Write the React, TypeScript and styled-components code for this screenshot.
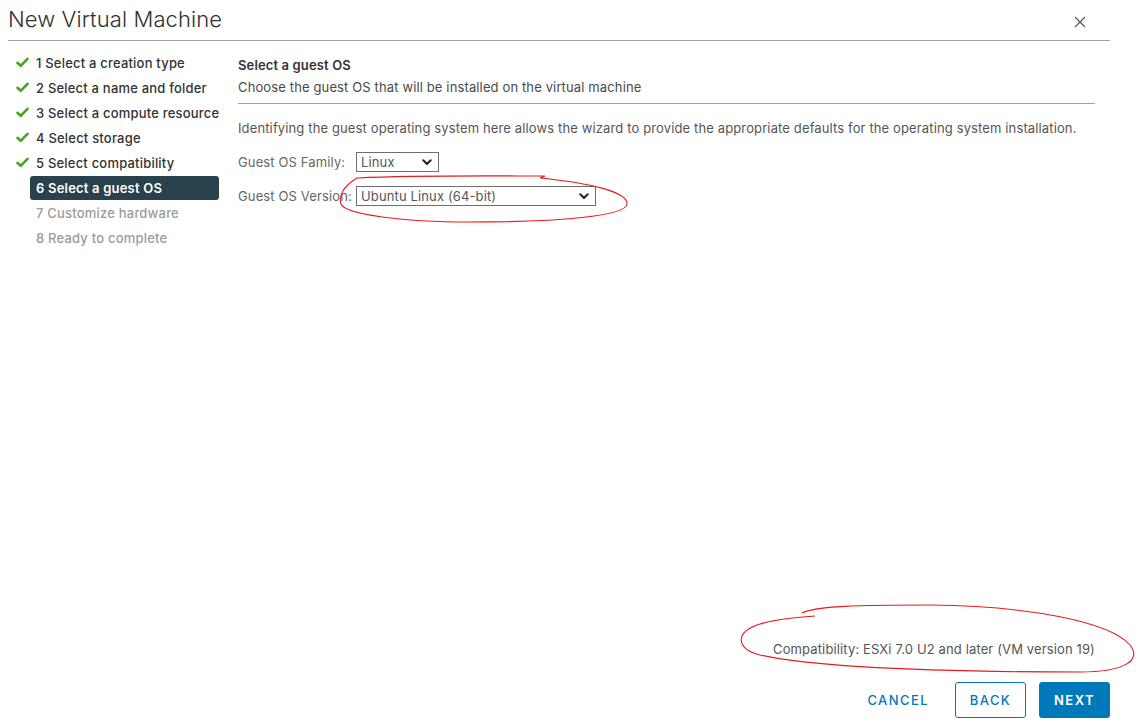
import React from "react";
import styled, { createGlobalStyle } from "styled-components";

const GlobalStyle = createGlobalStyle`
  html, body {
    margin: 0;
    padding: 0;
    background: #ffffff;
    font-family: Inter, "Noto Sans", "Liberation Sans", sans-serif;
  }
  * { box-sizing: border-box; }
`;

type StepState = "done" | "active" | "todo";
interface Step {
  label: string;
  state: StepState;
}

const steps: Step[] = [
  { label: "1 Select a creation type", state: "done" },
  { label: "2 Select a name and folder", state: "done" },
  { label: "3 Select a compute resource", state: "done" },
  { label: "4 Select storage", state: "done" },
  { label: "5 Select compatibility", state: "done" },
  { label: "6 Select a guest OS", state: "active" },
  { label: "7 Customize hardware", state: "todo" },
  { label: "8 Ready to complete", state: "todo" },
];

const CheckIcon = () => (
  <svg width="13" height="11" viewBox="0 0 13 11">
    <path d="M1.5 5.8 L4.7 8.8 L11.5 1.8" fill="none" stroke="#4aa31f" strokeWidth="2.6" strokeLinecap="round" strokeLinejoin="round" />
  </svg>
);

const Chevron = () => (
  <svg width="10" height="7" viewBox="0 0 10 7">
    <path d="M1.3 1.3 L5 5 L8.7 1.3" fill="none" stroke="#222" strokeWidth="2" strokeLinecap="round" strokeLinejoin="round" />
  </svg>
);

const App: React.FunctionComponent = (): JSX.Element => {
  return (
    <>
      <GlobalStyle />
      <Dialog>
        <Header>
          <Title>New Virtual Machine</Title>
          <CloseButton aria-label="close">
            <svg width="12" height="12" viewBox="0 0 12 12">
              <path d="M1 1 L11 11 M11 1 L1 11" stroke="#555" strokeWidth="1.2" />
            </svg>
          </CloseButton>
        </Header>

        <Body>
          <StepList>
            {steps.map((step) => (
              <StepRow key={step.label}>
                <StepIcon>{step.state === "done" && <CheckIcon />}</StepIcon>
                <StepLabel state={step.state}>{step.label}</StepLabel>
              </StepRow>
            ))}
          </StepList>

          <Content>
            <PageTitle>Select a guest OS</PageTitle>
            <PageSubtitle>Choose the guest OS that will be installed on the virtual machine</PageSubtitle>
            <Description>
              Identifying the guest operating system here allows the wizard to provide the appropriate defaults for the operating system installation.
            </Description>
            <FormRow>
              <FieldLabel>Guest OS Family:</FieldLabel>
              <SelectBox width={83}>
                <span>Linux</span>
                <Chevron />
              </SelectBox>
            </FormRow>
            <FormRow>
              <FieldLabel>Guest OS Version:</FieldLabel>
              <SelectBox width={240}>
                <span>Ubuntu Linux (64-bit)</span>
                <Chevron />
              </SelectBox>
            </FormRow>
          </Content>
        </Body>

        <Footer>
          <Compatibility>Compatibility: ESXi 7.0 U2 and later (VM version 19)</Compatibility>
          <ButtonBar>
            <Button variant="flat">Cancel</Button>
            <Button variant="outline">Back</Button>
            <Button variant="solid">Next</Button>
          </ButtonBar>
        </Footer>

        <Annotation viewBox="0 0 1139 727">
          <path
            d="M357 178 C420 175 500 176 545 176 L540 178 C590 183 628 192 627 204 C626 216 560 222 470 222 C400 222 345 214 341 204 C338 195 345 185 357 178"
            fill="none" stroke="#e8191c" strokeWidth="1.1" />
          <path
            d="M802 613 C815 606 860 605 930 605 C1030 606 1110 622 1130 645 C1142 660 1125 672 1080 672 C950 672 820 668 760 655 C735 648 735 632 760 624 C780 618 800 617 815 616"
            fill="none" stroke="#e8191c" strokeWidth="1.1" />
        </Annotation>
      </Dialog>
    </>
  );
};
export default App;

const Dialog = styled.div`
  position: relative;
  display: flex;
  flex-direction: column;
  height: 100vh;
  padding: 0 29px 0 8px;
  letter-spacing: 0.13px;
`;

const Header = styled.div`
  display: flex;
  align-items: center;
  justify-content: space-between;
  height: 41px;
  border-bottom: 1px solid #a3a3a3;
  padding-bottom: 2px;
`;

const Title = styled.h1`
  margin: 0;
  font-size: 22px;
  font-weight: 300;
  color: #313131;
  letter-spacing: 0.1px;
`;

const CloseButton = styled.button`
  display: flex;
  align-items: center;
  justify-content: center;
  width: 24px;
  height: 24px;
  margin-right: 18px;
  margin-top: 6px;
  padding: 0;
  border: none;
  background: none;
`;

const Body = styled.div`
  display: flex;
  flex: 1;
  min-height: 0;
`;

const StepList = styled.div`
  display: flex;
  flex-direction: column;
  width: 222px;
  padding-top: 9px;
`;

const StepRow = styled.div`
  display: flex;
  align-items: center;
  height: 25px;
`;

const StepIcon = styled.div`
  display: flex;
  align-items: center;
  width: 22px;
  padding-left: 8px;
`;

const StepLabel = styled.div<{ state: StepState }>`
  width: 189px;
  height: 24px;
  display: flex;
  align-items: center;
  padding: 0 6px;
  border-radius: 3px;
  white-space: nowrap;
  font-size: 13px;
  letter-spacing: 0.2px;
  font-weight: ${(p) => (p.state === "active" ? 600 : 500)};
  background: ${(p) => (p.state === "active" ? "#29404d" : "transparent")};
  color: ${(p) =>
    p.state === "active" ? "#ffffff" : p.state === "done" ? "#333333" : "#9b9b9b"};
`;

const Content = styled.div`
  flex: 1;
  display: flex;
  flex-direction: column;
  padding: 15px 15px 0 8px;
`;

const PageTitle = styled.div`
  font-size: 13px;
  font-weight: 600;
  color: #333;
  line-height: 18px;
`;

const PageSubtitle = styled.div`
  font-size: 13px;
  color: #4a4a4a;
  line-height: 18px;
  margin-top: 4px;
  padding-bottom: 7px;
  border-bottom: 1px solid #a3a3a3;
`;

const Description = styled.p`
  margin: 15px 0 0;
  font-size: 13px;
  line-height: 18px;
  color: #565656;
`;

const FormRow = styled.div`
  display: flex;
  align-items: center;
  margin-top: 15px;
  & + & {
    margin-top: 14px;
  }
`;

const FieldLabel = styled.label`
  width: 118px;
  font-size: 13px;
  color: #666;
`;

const SelectBox = styled.div<{ width: number }>`
  display: flex;
  align-items: center;
  justify-content: space-between;
  width: ${(p) => p.width}px;
  height: 20px;
  padding: 0 6px 0 4px;
  border: 1px solid #6e6e6e;
  font-size: 13px;
  color: #555;
`;

const Footer = styled.div`
  display: flex;
  flex-direction: column;
  align-items: flex-end;
  padding-bottom: 9px;
`;

const Compatibility = styled.div`
  font-size: 13px;
  color: #555;
  margin-right: 15px;
  margin-bottom: 25px;
`;

const ButtonBar = styled.div`
  display: flex;
  align-items: center;
  gap: 13px;
`;

const Button = styled.button<{ variant: "flat" | "outline" | "solid" }>`
  height: 36px;
  padding: 0 12px;
  min-width: 71px;
  border-radius: 3px;
  font-family: inherit;
  font-size: 13px;
  font-weight: ${(p) => (p.variant === "solid" ? 600 : 500)};
  letter-spacing: 0.11em;
  text-transform: uppercase;
  border: 1px solid ${(p) => (p.variant === "flat" ? "transparent" : "#0079b8")};
  background: ${(p) => (p.variant === "solid" ? "#0079b8" : "#ffffff")};
  color: ${(p) => (p.variant === "solid" ? "#ffffff" : "#0079b8")};
`;

const Annotation = styled.svg`
  position: absolute;
  inset: 0;
  width: 1139px;
  height: 727px;
  pointer-events: none;
`;
